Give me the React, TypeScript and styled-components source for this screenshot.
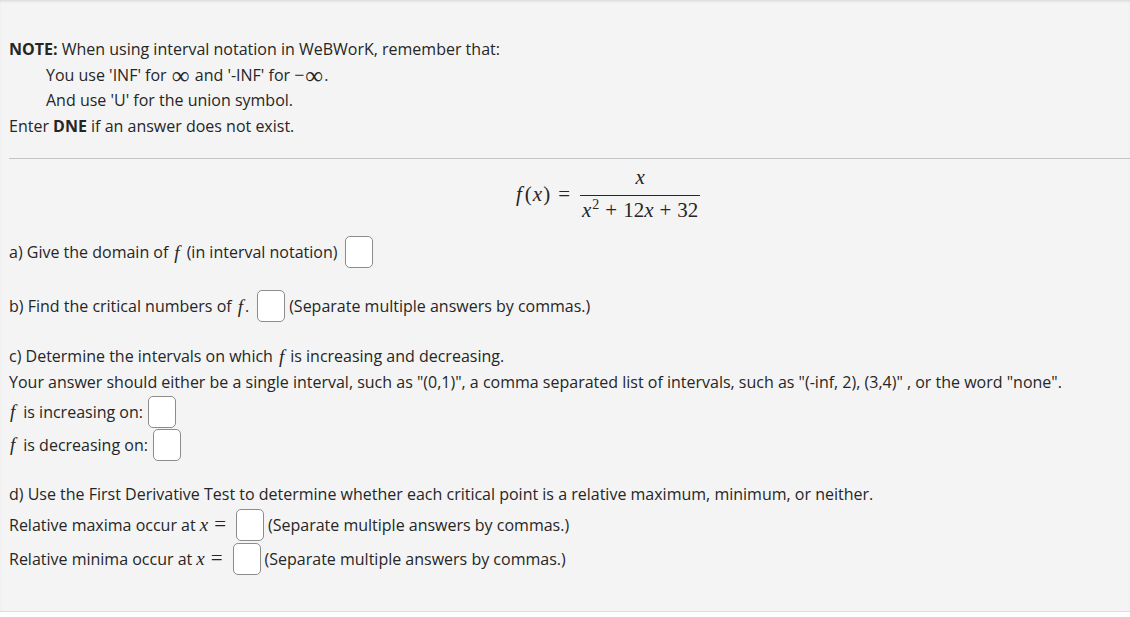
import React from "react";
import styled, { createGlobalStyle } from "styled-components";

const Global = createGlobalStyle`
  html, body { margin: 0; padding: 0; background: #ffffff; }
  body { font-family: "Open Sans", "Noto Sans", sans-serif; color: #262626; }
`;

const Page = styled.div`
  height: 612px;
  box-sizing: border-box;
  background: #f4f4f4;
  border-bottom: 1px solid #dcdcdc;
  box-shadow: inset 0 2px 3px -1px rgba(0, 0, 0, 0.12);
  padding: 37px 0 0 9px;
  font-size: 16px;
  overflow: hidden;
`;

const Note = styled.div`
  line-height: 25.5px;
`;

const NoteLine = styled.div<{ $indent?: boolean }>`
  padding-left: ${(p) => (p.$indent ? "37px" : "0")};
  white-space: nowrap;
  height: 25.5px;
`;

const Rule = styled.hr`
  border: none;
  border-top: 1px solid #c4c4c4;
  margin: 19px 0 0 0;
`;

const Display = styled.div`
  height: 76px;
  display: flex;
  align-items: center;
  padding-left: 507px;
  padding-bottom: 6px;
  box-sizing: border-box;
`;

const MathText = styled.span<{ $size?: number }>`
  font-family: "Liberation Serif", "DejaVu Serif", serif;
  font-size: ${(p) => p.$size ?? 21}px;
  white-space: nowrap;
  line-height: 1;
`;

const InfGlyph = styled.span`
  font-family: "Liberation Serif", serif;
  font-size: 25px;
  line-height: 0;
  display: inline-block;
  vertical-align: -3px;
  margin: 0 1px;
`;

const MI = styled.i<{ $size?: number }>`
  font-family: "Liberation Serif", "DejaVu Serif", serif;
  font-style: italic;
  font-size: ${(p) => p.$size ?? 21}px;
  line-height: 1;
`;

const Op = styled.span<{ $m?: number }>`
  font-family: "Liberation Serif", "DejaVu Serif", serif;
  font-size: 21px;
  line-height: 1;
  margin: 0 ${(p) => p.$m ?? 6}px;
`;

const Frac = styled.span`
  display: inline-flex;
  flex-direction: column;
  align-items: center;
  margin-left: 2px;
`;

const Num = styled.span`
  padding: 0 4px 6px;
`;

const Den = styled.span`
  border-top: 1px solid #262626;
  padding: 4px 2px 0;
`;

const Sup = styled.sup`
  font-size: 14px;
  vertical-align: 8px;
  line-height: 0;
  margin-left: 1px;
`;

const Section = styled.div<{ $gap?: number }>`
  display: flex;
  flex-direction: column;
  margin-top: ${(p) => p.$gap ?? 0}px;
`;

const Line = styled.div<{ $h?: number; $mt?: number }>`
  display: flex;
  align-items: center;
  height: ${(p) => p.$h ?? 26}px;
  margin-top: ${(p) => p.$mt ?? 0}px;
  white-space: nowrap;
`;

const Box = styled.span<{ $ml?: number; $mr?: number }>`
  display: inline-block;
  box-sizing: border-box;
  width: 28px;
  height: 32px;
  background: #ffffff;
  border: 1px solid #8c8c8c;
  border-radius: 5px;
  margin-left: ${(p) => p.$ml ?? 4}px;
  margin-right: ${(p) => p.$mr ?? 4}px;
`;

const Sp = styled.span<{ $w: number }>`
  display: inline-block;
  width: ${(p) => p.$w}px;
`;

export default function App() {
  return (
    <>
      <Global />
      <Page>
        <Note>
          <NoteLine>
            <b>NOTE:</b> When using interval notation in WeBWorK, remember that:
          </NoteLine>
          <NoteLine $indent>
            You use 'INF' for <InfGlyph>∞</InfGlyph> and '-INF' for{" "}
            <MathText $size={18}>−</MathText>
            <InfGlyph>∞</InfGlyph>.
          </NoteLine>
          <NoteLine $indent>And use 'U' for the union symbol.</NoteLine>
          <NoteLine>
            Enter <b>DNE</b> if an answer does not exist.
          </NoteLine>
        </Note>
        <Rule />
        <Display>
          <MathText>
            <MI>f</MI>
            <Sp $w={3} />(<Sp $w={1} />
            <MI>x</MI>
            <Sp $w={1} />)
          </MathText>
          <Op $m={8}>=</Op>
          <Frac>
            <Num>
              <MI>x</MI>
            </Num>
            <Den>
              <MathText>
                <MI>x</MI>
                <Sup>2</Sup>
                <Op $m={6}>+</Op>12<MI>x</MI>
                <Op $m={6}>+</Op>32
              </MathText>
            </Den>
          </Frac>
        </Display>
        <Section>
          <Line $h={34}>
            a) Give the domain of <Sp $w={6} />
            <MI $size={19}>f</MI>
            <Sp $w={7} />
            (in interval notation)
            <Box $ml={8} />
          </Line>
          <Line $h={34} $mt={20}>
            b) Find the critical numbers of <Sp $w={6} />
            <MI $size={19}>f</MI>
            <Sp $w={2} />.
            <Box $ml={8} />
            (Separate multiple answers by commas.)
          </Line>
        </Section>
        <Section $gap={20}>
          <Line>
            c) Determine the intervals on which <Sp $w={6} />
            <MI $size={19}>f</MI>
            <Sp $w={6} /> is increasing and decreasing.
          </Line>
          <Line>
            Your answer should either be a single interval, such as "(0,1)", a comma separated list of intervals, such as "(-inf, 2), (3,4)" , or the word "none".
          </Line>
          <Line $h={33}>
            <Sp $w={1} />
            <MI $size={19}>f</MI>
            <Sp $w={8} />
            is increasing on:
            <Box $ml={5} />
          </Line>
          <Line $h={33}>
            <Sp $w={1} />
            <MI $size={19}>f</MI>
            <Sp $w={8} />
            is decreasing on:
            <Box $ml={5} />
          </Line>
        </Section>
        <Section $gap={20}>
          <Line>
            d) Use the First Derivative Test to determine whether each critical point is a relative maximum, minimum, or neither.
          </Line>
          <Line $h={33} $mt={1}>
            Relative maxima occur at <Sp $w={4} />
            <MI $size={19}>x</MI>
            <Op $m={6}>=</Op>
            <Box $ml={4} />
            (Separate multiple answers by commas.)
          </Line>
          <Line $h={33} $mt={1}>
            Relative minima occur at <Sp $w={4} />
            <MI $size={19}>x</MI>
            <Op $m={6}>=</Op>
            <Box $ml={4} />
            (Separate multiple answers by commas.)
          </Line>
        </Section>
      </Page>
    </>
  );
}
